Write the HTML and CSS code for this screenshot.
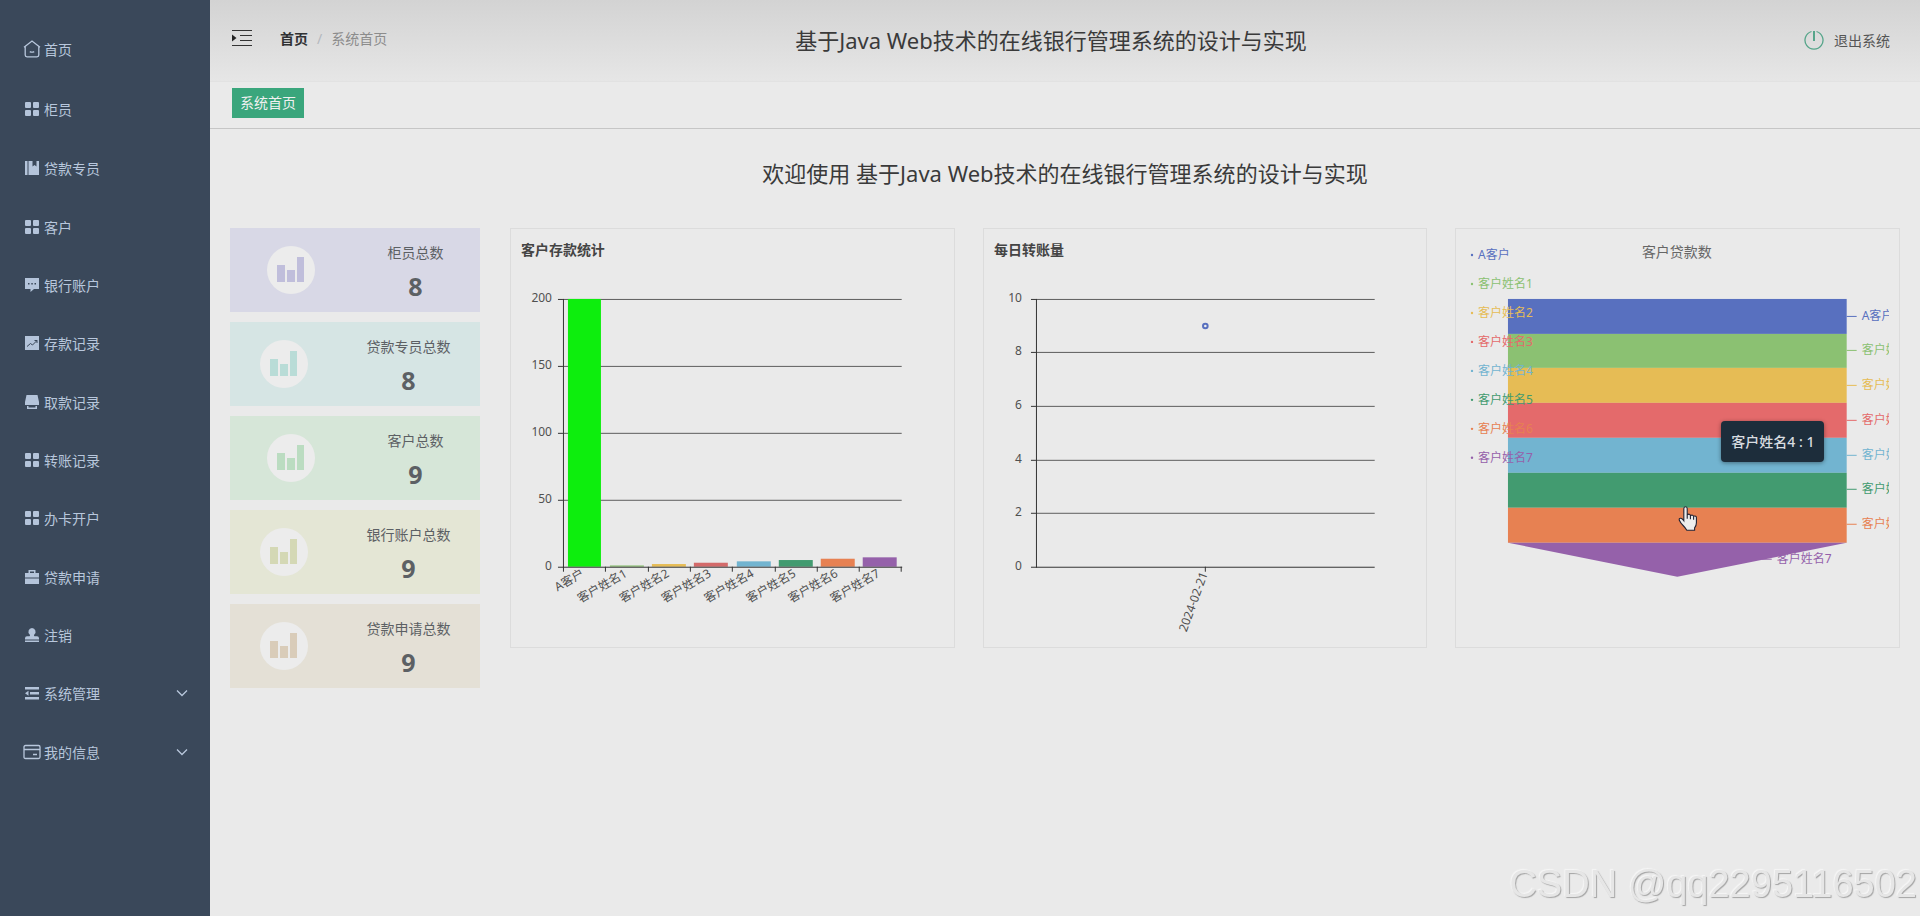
FILE: index.html
```html
<!DOCTYPE html>
<html lang="zh-CN">
<head>
    <meta charset="UTF-8">
    <meta name="viewport" content="width=device-width, initial-scale=1.0">
    <title>基于Java Web技术的在线银行管理系统的设计与实现</title>
    <link rel="stylesheet" href="styles.css">
</head>
<body>
    <!-- Shared icons -->
    <svg class="sprite" aria-hidden="true">
        <symbol id="icon-grid" viewBox="0 0 18 18">
            <rect x="2" y="2" width="6" height="6" rx="1"/><rect x="10" y="2" width="6" height="6" rx="1"/>
            <rect x="2" y="10" width="6" height="6" rx="1"/><rect x="10" y="10" width="6" height="6" rx="1"/>
        </symbol>
        <symbol id="icon-arrow" viewBox="0 0 12 12">
            <path d="M1 3.5l5 5 5-5" fill="none" stroke="currentColor" stroke-width="1.3"/>
        </symbol>
        <symbol id="icon-bars" viewBox="0 0 48 48">
            <circle cx="24" cy="24" r="24" fill="#ececec"/>
            <path d="M10 19h8v17h-8zM20 24h8v12h-8zM30 11h7v25h-7z"/>
        </symbol>
    </svg>

    <div class="layout">
        <nav class="sidebar">
            <ul class="menu">
                <li><a href="#"><svg class="icon" viewBox="0 0 18 18"><path d="M1 7.3L9 1l8 6.3M2.2 6.8V15q0 1.8 1.8 1.8h10q1.8 0 1.8-1.8V6.8M6.8 11.6q2.200 1.200 4.400 0" fill="none" stroke="currentColor" stroke-width="1.3"/></svg>首页</a></li>
                <li><a href="#"><svg class="icon"><use href="#icon-grid"/></svg>柜员</a></li>
                <li><a href="#"><svg class="icon" viewBox="0 0 18 18"><path d="M2 2h2.500v14H2zM5.500 2h4v5.500l2-1.500 2 1.500V2H16v14H5.500z"/></svg>贷款专员</a></li>
                <li><a href="#"><svg class="icon"><use href="#icon-grid"/></svg>客户</a></li>
                <li><a href="#"><svg class="icon" viewBox="0 0 18 18"><path fill-rule="evenodd" d="M2 2h14v11h-5l-3.500 3v-3H2zM5 7v1.500h1.500V7zM8.300 7v1.500h1.500V7zM11.500 7v1.500H13V7z"/></svg>银行账户</a></li>
                <li><a href="#"><svg class="icon" viewBox="0 0 18 18"><path d="M2 2h14v14H2z"/><path class="cutout" d="M4 12.500l3.500-3 2 1.500L14 6.500M11.500 6.500H14V9"/></svg>存款记录</a></li>
                <li><a href="#"><svg class="icon" viewBox="0 0 18 18"><path d="M3.500 2h11l1.500 7v3H2V9zM4 13h1.500v1.500h7V13H14v3H4z"/></svg>取款记录</a></li>
                <li><a href="#"><svg class="icon"><use href="#icon-grid"/></svg>转账记录</a></li>
                <li><a href="#"><svg class="icon"><use href="#icon-grid"/></svg>办卡开户</a></li>
                <li><a href="#"><svg class="icon" viewBox="0 0 18 18"><path fill-rule="evenodd" d="M5.500 5V2h7v3H16v4.500H2V5zM7 5h4V3.500H7zM2 10.500h14V16H2z"/></svg>贷款申请</a></li>
                <li><a href="#"><svg class="icon" viewBox="0 0 18 18"><path d="M9 2a3.700 3.700 0 0 1 2.300 6.500q-.800 1 .200 1.800H14q2 0 2 2v1.200H2v-1.200q0-2 2-2h2.500q1-.800.200-1.800A3.700 3.700 0 0 1 9 2zM2 14.500h14V16H2z"/></svg>注销</a></li>
                <li><button type="button"><svg class="icon" viewBox="0 0 18 18"><path d="M2 3h14v2.500H2zM7 8h9v2.500H7zM2 13h14v2.500H2zM2 9.200l3.500-2.500v5z"/></svg>系统管理<svg class="arrow"><use href="#icon-arrow"/></svg></button></li>
                <li><button type="button"><svg class="icon" viewBox="0 0 18 18"><path d="M2.500 2.500h13q1.500 0 1.500 1.500v10q0 1.500-1.500 1.500h-13Q1 15.500 1 14V4q0-1.500 1.500-1.500zM1 6.500h16M10 11.500h4" fill="none" stroke="currentColor" stroke-width="1.3"/></svg>我的信息<svg class="arrow"><use href="#icon-arrow"/></svg></button></li>
            </ul>
        </nav>

        <div class="page">
            <header class="header">
                <div class="header-left">
                    <button type="button" class="fold" aria-label="折叠菜单">
                        <svg viewBox="0 0 20 18"><path d="M0 1.500h20M8 6.500h12M8 11.500h12M0 16.500h20" fill="none" stroke="#333" stroke-width="1.2"/><path d="M0 5.500l4.500 3.500L0 12.500z" fill="#222"/></svg>
                    </button>
                    <div class="breadcrumb">
                        <a href="#">首页</a><span class="slash">/</span><span>系统首页</span>
                    </div>
                </div>
                <h1>基于Java Web技术的在线银行管理系统的设计与实现</h1>
                <button type="button" class="logout">
                    <svg viewBox="0 0 20 20" fill="none" stroke="#56a58a"><path d="M7.500 1.500a9 9 0 1 0 5 0" stroke-width="1.3"/><path d="M10 1v10" stroke-width="2"/></svg>
                    退出系统
                </button>
            </header>

            <div class="tabs"><a href="#" class="tab">系统首页</a></div>

            <main class="main">
                <h2>欢迎使用 基于Java Web技术的在线银行管理系统的设计与实现</h2>
                <div class="board">
                    <div class="stats">
                        <div class="stat purple"><svg><use href="#icon-bars"/></svg><div><p>柜员总数</p><strong>8</strong></div></div>
                        <div class="stat teal"><svg><use href="#icon-bars"/></svg><div><p>贷款专员总数</p><strong>8</strong></div></div>
                        <div class="stat green"><svg><use href="#icon-bars"/></svg><div><p>客户总数</p><strong>9</strong></div></div>
                        <div class="stat yellow"><svg><use href="#icon-bars"/></svg><div><p>银行账户总数</p><strong>9</strong></div></div>
                        <div class="stat sand"><svg><use href="#icon-bars"/></svg><div><p>贷款申请总数</p><strong>9</strong></div></div>
                    </div>

                    <div class="charts">
                        <!-- Deposits bar chart -->
                        <section class="chart">
                            <svg viewBox="0 0 423 398">
                                <text class="title" x="0" y="16">客户存款统计</text>
                                <path class="split" d="M42 60.500h339M42 127.500h339M42 194.500h339M42 261.500h339"/>
                                <g class="value-labels">
                                    <text x="31" y="63">200</text><text x="31" y="130">150</text><text x="31" y="197">100</text>
                                    <text x="31" y="264">50</text><text x="31" y="331">0</text>
                                </g>
                                <rect x="47" y="60" width="33" height="268" fill="#0dee0d"/>
                                <rect x="89" y="326.700" width="34" height="1.300" fill="#8bc172"/>
                                <rect x="131" y="325.300" width="34" height="2.700" fill="#e6bc55"/>
                                <rect x="173" y="324" width="34" height="4" fill="#d36a6a"/>
                                <rect x="216" y="322.600" width="34" height="5.400" fill="#72b4d0"/>
                                <rect x="258" y="321.300" width="34" height="6.700" fill="#429b70"/>
                                <rect x="300" y="320" width="34" height="8" fill="#e78152"/>
                                <rect x="342" y="318.600" width="34" height="9.400" fill="#9561aa"/>
                                <path class="axis" d="M42.500 60v269M37 60.500h5M37 127.500h5M37 194.500h5M37 261.500h5M37 328.500h344.500M42.500 328v5M84.500 328v5M127.500 328v5M169.500 328v5M211.500 328v5M254.500 328v5M296.500 328v5M338.500 328v5M380.500 328v5"/>
                                <g class="name-labels">
                                    <text transform="translate(64 337) rotate(-30)">A客户</text>
                                    <text transform="translate(107 337) rotate(-30)">客户姓名1</text>
                                    <text transform="translate(149 337) rotate(-30)">客户姓名2</text>
                                    <text transform="translate(191 337) rotate(-30)">客户姓名3</text>
                                    <text transform="translate(234 337) rotate(-30)">客户姓名4</text>
                                    <text transform="translate(276 337) rotate(-30)">客户姓名5</text>
                                    <text transform="translate(318 337) rotate(-30)">客户姓名6</text>
                                    <text transform="translate(360 337) rotate(-30)">客户姓名7</text>
                                </g>
                            </svg>
                        </section>

                        <!-- Daily transfers line chart -->
                        <section class="chart">
                            <svg viewBox="0 0 423 398">
                                <text class="title" x="0" y="16">每日转账量</text>
                                <path class="split" d="M42 60.500h339M42 113.500h339M42 167.500h339M42 221.500h339M42 274.500h339"/>
                                <path class="axis" d="M42.500 60v269M37 60.500h5M37 113.500h5M37 167.500h5M37 221.500h5M37 274.500h5M37 328.500h344M211.500 328v5"/>
                                <g class="value-labels">
                                    <text x="28" y="63">10</text><text x="28" y="116">8</text><text x="28" y="170">6</text>
                                    <text x="28" y="224">4</text><text x="28" y="277">2</text><text x="28" y="331">0</text>
                                </g>
                                <circle cx="211.500" cy="87" r="2.300" fill="#eee" stroke="#5870bf" stroke-width="2"/>
                                <g class="name-labels"><text transform="translate(214 335) rotate(-70)">2024-02-21</text></g>
                            </svg>
                        </section>

                        <!-- Loans funnel chart -->
                        <section class="chart">
                            <svg viewBox="0 0 423 398">
                                <text class="caption" x="211" y="18">客户贷款数</text>
                                <rect x="42" y="60" width="339" height="35" fill="#5870bf"/>
                                <rect x="42" y="95" width="339" height="34" fill="#8bc172"/>
                                <rect x="42" y="129" width="339" height="35" fill="#e6bc55"/>
                                <rect x="42" y="164" width="339" height="35" fill="#e46a6b"/>
                                <rect x="42" y="199" width="339" height="35" fill="#72b4d0"/>
                                <rect x="42" y="234" width="339" height="35" fill="#429b70"/>
                                <rect x="42" y="269" width="339" height="35" fill="#e78152"/>
                                <path d="M42 304h339l-169.500 34z" fill="#9561aa"/>
                                <g class="funnel-text c1"><circle cx="6" cy="16" r="1.200"/><text x="12" y="20">A客户</text><path d="M381 77.500h10"/><text x="396" y="81">A客户</text></g>
                                <g class="funnel-text c2"><circle cx="6" cy="45" r="1.200"/><text x="12" y="49">客户姓名1</text><path d="M381 111.500h10"/><text x="396" y="115">客户姓名1</text></g>
                                <g class="funnel-text c3"><circle cx="6" cy="74" r="1.200"/><text x="12" y="78">客户姓名2</text><path d="M381 146.500h10"/><text x="396" y="150">客户姓名2</text></g>
                                <g class="funnel-text c4"><circle cx="6" cy="103" r="1.200"/><text x="12" y="107">客户姓名3</text><path d="M381 181.500h10"/><text x="396" y="185">客户姓名3</text></g>
                                <g class="funnel-text c5"><circle cx="6" cy="132" r="1.200"/><text x="12" y="136">客户姓名4</text><path d="M381 216.500h10"/><text x="396" y="220">客户姓名4</text></g>
                                <g class="funnel-text c6"><circle cx="6" cy="161" r="1.200"/><text x="12" y="165">客户姓名5</text><path d="M381 250.500h10"/><text x="396" y="254">客户姓名5</text></g>
                                <g class="funnel-text c7"><circle cx="6" cy="190" r="1.200"/><text x="12" y="194">客户姓名6</text><path d="M381 285.500h10"/><text x="396" y="289">客户姓名6</text></g>
                                <g class="funnel-text c8"><circle cx="6" cy="219" r="1.200"/><text x="12" y="223">客户姓名7</text><path d="M296 320.500h10"/><text x="311" y="324">客户姓名7</text></g>
                                <!-- Pointer -->
                                <path d="M218 282v-12q0-2 1.700-2t1.700 2v6q2.500-1.500 3.200.700 2.500-1 3.200.800 2.800-.800 2.800 1.500v5q0 3-1.800 5v2.500h-7.800q-1.500-2.500-3.500-4.500-3-3-4-5.500-.500-2.200 1.500-2 1.500.300 3 2.500zM221.400 276v4M224.600 277v3.500M227.800 278v3" fill="#eee" stroke="#223" stroke-width="1.100"/>
                            </svg>
                            <div class="tooltip">客户姓名4 : 1</div>
                        </section>
                    </div>
                </div>
            </main>
        </div>
    </div>
    <div class="watermark">CSDN @qq2295116502</div>
</body>
</html>
```
FILE: styles.css
```css
* {
    box-sizing: border-box;
}

body {
    margin: 0;
    font-family: "Noto Sans", "Noto Sans CJK SC", sans-serif;
    font-size: 14px;
    color: #555;
    background: #eaeaea;
}

a {
    color: inherit;
    text-decoration: none;
}

button {
    border: none;
    padding: 0;
    background: none;
    font: inherit;
    color: inherit;
    cursor: pointer;
}

h1,
h2 {
    margin: 0;
    font-size: 22px;
    font-weight: normal;
    color: #3a3a3a;
    text-align: center;
}

.sprite {
    display: none;
}

.layout {
    display: flex;
    min-height: 100vh;
}

/* Sidebar */
.sidebar {
    flex: none;
    width: 210px;
    padding-top: 19px;
    background: #3a485a;
    color: #b8c7dc;
}

.menu {
    list-style: none;
    margin: 0;
    padding: 0;
}

.menu a,
.menu button {
    display: flex;
    align-items: center;
    gap: 3px;
    width: 100%;
    height: 58px;
    padding: 0 22px 0 23px;
}

.menu li:nth-child(-n+2) a {
    height: 60px;
}

.menu li:nth-child(3n+4) {
    margin-top: 1px;
}

.menu .icon {
    width: 18px;
    height: 18px;
    fill: #b4c4da;
}

.menu .cutout {
    fill: none;
    stroke: #3a485a;
}

.menu .arrow {
    width: 12px;
    height: 12px;
    margin-left: auto;
}

.page {
    flex: 1;
    min-width: 0;
}

/* Header */
.header {
    display: grid;
    grid-template-columns: 1fr auto 1fr;
    align-items: center;
    height: 82px;
    padding: 0 30px 0 22px;
    background: linear-gradient(#d3d3d3, #e6e6e6);
    border-bottom: 1px solid #e2e2e2;
}

.header h1 {
    padding: 0 20px 3px 0;
}

.header-left {
    display: flex;
    align-items: center;
    gap: 28px;
    padding-bottom: 5px;
}

.fold svg {
    display: block;
    width: 20px;
    height: 18px;
}

.breadcrumb {
    color: #8c8c8c;
}

.breadcrumb a {
    font-weight: bold;
    color: #303133;
}

.breadcrumb .slash {
    margin: 0 9px;
    color: #b4b8be;
}

.logout {
    display: flex;
    align-items: center;
    justify-self: end;
    gap: 10px;
    padding-bottom: 1px;
}

.logout svg {
    width: 20px;
    height: 20px;
}

.tabs {
    display: flex;
    height: 47px;
    padding: 6px 22px;
    border-bottom: 1px solid #c6c6c6;
}

.tab {
    height: 30px;
    padding: 0 8px;
    line-height: 30px;
    color: #f0f0f0;
    background: #3aa67c;
}

/* Main */
.main {
    padding: 29px 20px;
}

.main h2 {
    line-height: 30px;
}

.board {
    display: flex;
    align-items: flex-start;
    gap: 30px;
    margin-top: 40px;
}

.stats {
    display: grid;
    flex: none;
    gap: 10px;
    width: 250px;
}

.stat {
    display: flex;
    align-items: center;
    justify-content: space-around;
    padding: 8px 0;
    text-align: center;
    color: #5c6064;
}

.stat svg {
    width: 48px;
    height: 48px;
}

.stat p {
    margin: 0;
    line-height: 34px;
}

.stat strong {
    display: block;
    padding-bottom: 2px;
    font-size: 25px;
    line-height: 32px;
}

.purple { background: #d8d8e6; fill: #c0bedb; }
.teal { background: #d6e5e4; fill: #b9dcd7; }
.green { background: #d6e6d8; fill: #bbdcc1; }
.yellow { background: #e4e6d5; fill: #d4d8b5; }
.sand { background: #e4e0d6; fill: #d9ccb9; }

.charts {
    display: grid;
    grid-template-columns: repeat(3, 1fr);
    flex: 1;
    gap: 28px;
}

.chart {
    position: relative;
    padding: 10px;
    border: 1px solid #dcdcdc;
}

.chart svg {
    display: block;
    width: 100%;
    height: auto;
    overflow: hidden;
    font-size: 12px;
}

.title {
    font-size: 14px;
    font-weight: bold;
    fill: #444;
}

.caption {
    font-size: 14px;
    text-anchor: middle;
    fill: #666;
}

.split {
    stroke: #5c5c5c;
}

.axis {
    stroke: #333;
}

.value-labels,
.name-labels {
    fill: #505050;
    text-anchor: end;
}

.funnel-text {
    fill: currentColor;
    stroke: none;
}

.funnel-text path {
    stroke: currentColor;
}

.c1 { color: #5870bf; }
.c2 { color: #8bc172; }
.c3 { color: #e6bc55; }
.c4 { color: #e46a6b; }
.c5 { color: #72b4d0; }
.c6 { color: #429b70; }
.c7 { color: #e78152; }
.c8 { color: #9561aa; }

.tooltip {
    position: absolute;
    top: 192px;
    left: 265px;
    padding: 0 10px;
    line-height: 41px;
    font-weight: 500;
    white-space: nowrap;
    color: #d8dce0;
    background: #1d2d3b;
    border-radius: 4px;
    box-shadow: 0 1px 4px rgba(0, 0, 0, 0.4);
}

.watermark {
    position: fixed;
    right: 3px;
    bottom: 10px;
    font-family: "Liberation Sans", sans-serif;
    font-size: 38px;
    color: #e6e6e6;
    text-shadow: 1px 1px 1px #a4a4a4, -1px -1px 1px #f6f6f6;
}
```
